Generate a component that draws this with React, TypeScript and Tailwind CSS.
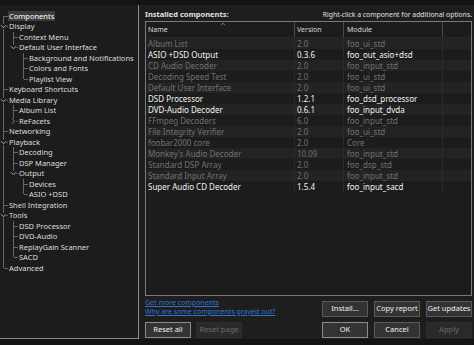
import React from 'react';

type Node = { label: string; depth: number; exp?: 'open' | 'closed' };

const tree: Node[] = [
  { label: 'Components', depth: 0 },
  { label: 'Display', depth: 0, exp: 'open' },
  { label: 'Context Menu', depth: 1 },
  { label: 'Default User Interface', depth: 1, exp: 'open' },
  { label: 'Background and Notifications', depth: 2 },
  { label: 'Colors and Fonts', depth: 2 },
  { label: 'Playlist View', depth: 2 },
  { label: 'Keyboard Shortcuts', depth: 0 },
  { label: 'Media Library', depth: 0, exp: 'open' },
  { label: 'Album List', depth: 1 },
  { label: 'ReFacets', depth: 1, exp: 'closed' },
  { label: 'Networking', depth: 0 },
  { label: 'Playback', depth: 0, exp: 'open' },
  { label: 'Decoding', depth: 1 },
  { label: 'DSP Manager', depth: 1 },
  { label: 'Output', depth: 1, exp: 'open' },
  { label: 'Devices', depth: 2 },
  { label: 'ASIO +DSD', depth: 2 },
  { label: 'Shell Integration', depth: 0 },
  { label: 'Tools', depth: 0, exp: 'open' },
  { label: 'DSD Processor', depth: 1 },
  { label: 'DVD-Audio', depth: 1 },
  { label: 'ReplayGain Scanner', depth: 1 },
  { label: 'SACD', depth: 1 },
  { label: 'Advanced', depth: 0 },
];

// true if a row at `level` follows index i before the branch closes
function continues(i: number, level: number) {
  for (let j = i + 1; j < tree.length; j++) {
    if (tree[j].depth < level) return false;
    if (tree[j].depth === level) return true;
  }
  return false;
}

const rows: [string, string, string, boolean][] = [
  ['Album List', '2.0', 'foo_ui_std', false],
  ['ASIO +DSD Output', '0.3.6', 'foo_out_asio+dsd', true],
  ['CD Audio Decoder', '2.0', 'foo_input_std', false],
  ['Decoding Speed Test', '2.0', 'foo_ui_std', false],
  ['Default User Interface', '2.0', 'foo_ui_std', false],
  ['DSD Processor', '1.2.1', 'foo_dsd_processor', true],
  ['DVD-Audio Decoder', '0.6.1', 'foo_input_dvda', true],
  ['FFmpeg Decoders', '6.0', 'foo_input_std', false],
  ['File Integrity Verifier', '2.0', 'foo_ui_std', false],
  ['foobar2000 core', '2.0', 'Core', false],
  ["Monkey's Audio Decoder", '10.09', 'foo_input_std', false],
  ['Standard DSP Array', '2.0', 'foo_dsp_std', false],
  ['Standard Input Array', '2.0', 'foo_input_std', false],
  ['Super Audio CD Decoder', '1.5.4', 'foo_input_sacd', true],
];

const LINE = '#666666';
const H = 10.5;

function Guides({ i }: { i: number }) {
  const n = tree[i];
  const w = n.depth * 10 + 8;
  const mid = H / 2;
  const own = 3.5 + n.depth * 10;
  return (
    <svg width={w} height={H} className="shrink-0" shapeRendering="crispEdges">
      {Array.from({ length: n.depth }).map((_, k) =>
        continues(i, k) ? <line key={k} x1={3.5 + k * 10} y1={0} x2={3.5 + k * 10} y2={H} stroke={LINE} /> : null
      )}
      <line x1={own} y1={i === 0 ? mid : 0} x2={own} y2={continues(i, n.depth) ? H : mid} stroke={LINE} />
      <line x1={own} y1={mid} x2={own + 4.5} y2={mid} stroke={LINE} />
      {n.exp && (
        <g shapeRendering="auto">
          <rect x={own - 3} y={mid - 2.5} width={6} height={5} fill="#1c1c1c" />
          {n.exp === 'open' ? (
            <polyline points={`${own - 2.5},${mid - 1} ${own},${mid + 1.5} ${own + 2.5},${mid - 1}`} fill="none" stroke="#bdbdbd" strokeWidth={0.9} />
          ) : (
            <polyline points={`${own - 1.5},${mid - 2.5} ${own + 1},${mid} ${own - 1.5},${mid + 2.5}`} fill="none" stroke="#8a8a8a" strokeWidth={0.9} />
          )}
        </g>
      )}
    </svg>
  );
}

function Btn({ children, disabled, primary }: { children: React.ReactNode; disabled?: boolean; primary?: boolean }) {
  return (
    <div
      className={`w-[46px] h-[16px] flex items-center justify-center text-[7.5px] border ${
        disabled
          ? 'bg-[#2a2a2a] border-[#2e2e2e] text-[#6a6a6a]'
          : primary
          ? 'bg-[#333333] border-[#8c8c8c] text-[#f0f0f0]'
          : 'bg-[#333333] border-[#5a5a5a] text-[#f0f0f0]'
      }`}
    >
      {children}
    </div>
  );
}

export default function App() {
  return (
    <div className="w-[474px] h-[345px] bg-[#141414] flex flex-col overflow-hidden text-[#e6e6e6]" style={{ fontFamily: '"Noto Sans", "Open Sans", sans-serif' }}>
      <div className="h-[5px] shrink-0" />
      <div className="h-[334px] flex bg-[#1e1e1e]">
        {/* tree */}
        <div className="w-[139px] shrink-0 bg-[#1c1c1c] border-r border-b border-[#8a8a8a] pt-[5.75px] text-[7.5px] leading-[10.5px]">
          {tree.map((n, i) => (
            <div key={i} className="flex h-[10.5px] items-center">
              <Guides i={i} />
              <span className={`whitespace-nowrap px-[1px] ${i === 0 ? 'bg-[#3c3c3c] text-white' : 'text-[#dcdcdc]'}`}>{n.label}</span>
            </div>
          ))}
        </div>

        {/* right side */}
        <div className="flex-1 flex flex-col pl-[6px] pr-[2px]">
          <div className="h-[16px] flex items-end justify-between pb-[1px] leading-[11px]">
            <span className="font-bold text-[7.5px] text-[#e0e0e0]">Installed components:</span>
            <span className="text-[6.8px] text-[#e0e0e0]">Right-click a component for additional options.</span>
          </div>

          <div className="h-[275px] border border-[#7a7a7a] bg-[#1c1c1c] text-[8px] leading-[11px]">
            <div className="grid grid-cols-[149px_49px_99px_1fr] h-[16px] border-b border-[#262626]">
              <div className="relative flex items-center px-[2px] border-r border-[#4a4a4a] text-[#d8d8d8] text-[7px]">
                Name
                <svg className="absolute left-[74px] top-[0px]" width="6" height="4">
                  <polyline points="1,3.2 3,1.2 5,3.2" fill="none" stroke="#9a9a9a" strokeWidth="0.8" />
                </svg>
              </div>
              <div className="flex items-center px-[2px] border-r border-[#4a4a4a] text-[#d8d8d8] text-[7px]">Version</div>
              <div className="flex items-center px-[3px] border-r border-[#4a4a4a] text-[#d8d8d8] text-[7px]">Module</div>
              <div />
            </div>
            {rows.map(([name, ver, mod, on], i) => (
              <div key={i} className={`grid grid-cols-[149px_49px_99px_1fr] h-[11px] ${i % 2 === 0 ? 'bg-[#232323]' : 'bg-[#1c1c1c]'} ${on ? 'text-[#f2f2f2]' : 'text-[#727272]'}`}>
                <div className="px-[2px] whitespace-nowrap border-r border-[#2a2a2a]">{name}</div>
                <div className="px-[2px] whitespace-nowrap border-r border-[#2a2a2a]">{ver}</div>
                <div className="px-[3px] whitespace-nowrap border-r border-[#2a2a2a]">{mod}</div>
                <div />
              </div>
            ))}
          </div>

          <div className="h-[21px] flex items-end justify-between">
            <div className="flex flex-col self-start pt-[2px] text-[7px] leading-[9px] text-[#2f74d0] underline">
              <span>Get more components</span>
              <span>Why are some components grayed out?</span>
            </div>
            <div className="flex gap-[6px]">
              <Btn>Install...</Btn>
              <Btn>Copy report</Btn>
              <Btn>Get updates</Btn>
            </div>
          </div>

          <div className="mt-[5px] flex justify-between">
            <div className="flex gap-[5px]">
              <Btn primary>Reset all</Btn>
              <Btn disabled>Reset page</Btn>
            </div>
            <div className="flex gap-[6px]">
              <Btn primary>OK</Btn>
              <Btn>Cancel</Btn>
              <Btn disabled>Apply</Btn>
            </div>
          </div>
        </div>
      </div>
    </div>
  );
}
